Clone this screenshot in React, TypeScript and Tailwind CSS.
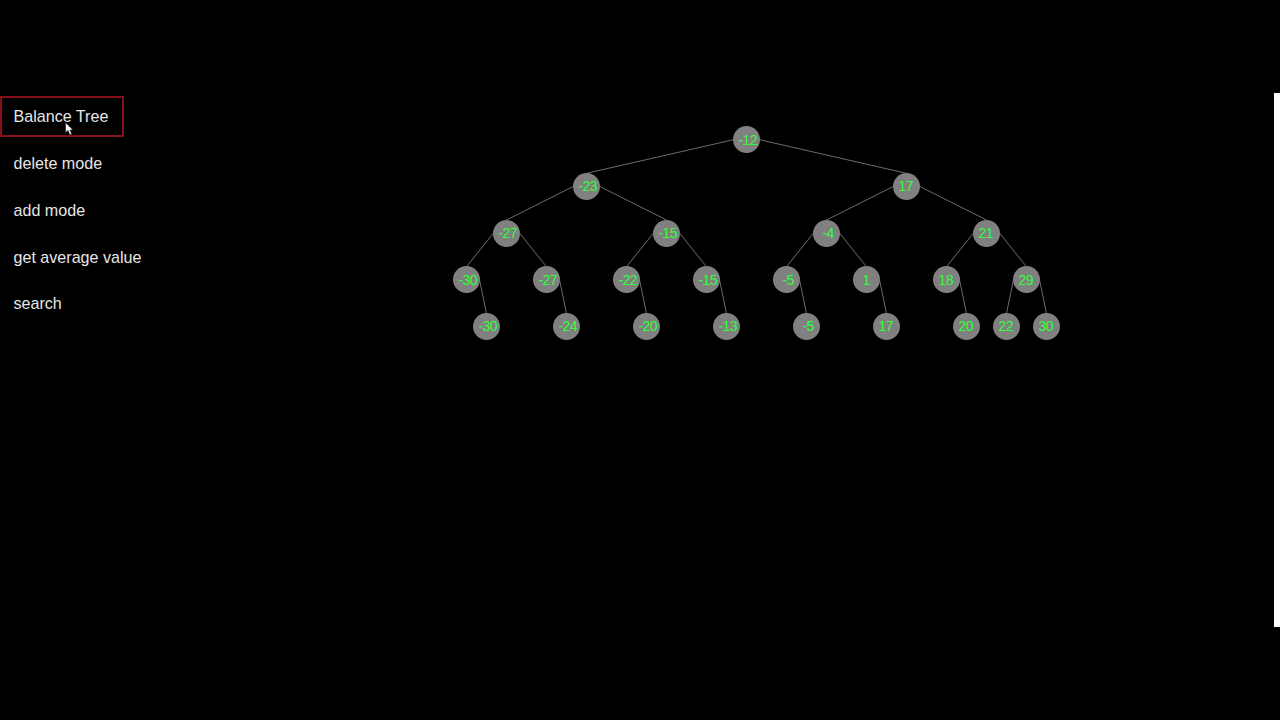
const rows = [139.7, 186.3, 233, 279.7, 326.3];

const nodes = [
  { id: 'a', x: 746.5, level: 0, label: '-12' },
  { id: 'b', x: 586.5, level: 1, label: '-23', parent: 'a' },
  { id: 'c', x: 906.5, level: 1, label: '17', parent: 'a' },
  { id: 'd', x: 506.5, level: 2, label: '-27', parent: 'b' },
  { id: 'e', x: 666.5, level: 2, label: '-15', parent: 'b' },
  { id: 'f', x: 826.5, level: 2, label: '-4', parent: 'c' },
  { id: 'g', x: 986.5, level: 2, label: '21', parent: 'c' },
  { id: 'h', x: 466.5, level: 3, label: '-30', parent: 'd' },
  { id: 'i', x: 546.5, level: 3, label: '-27', parent: 'd' },
  { id: 'j', x: 626.5, level: 3, label: '-22', parent: 'e' },
  { id: 'k', x: 706.5, level: 3, label: '-15', parent: 'e' },
  { id: 'l', x: 786.5, level: 3, label: '-5', parent: 'f' },
  { id: 'm', x: 866.5, level: 3, label: '1', parent: 'f' },
  { id: 'n', x: 946.5, level: 3, label: '18', parent: 'g' },
  { id: 'o', x: 1026.5, level: 3, label: '29', parent: 'g' },
  { id: 'p', x: 486.5, level: 4, label: '-30', parent: 'h' },
  { id: 'q', x: 566.5, level: 4, label: '-24', parent: 'i' },
  { id: 'r', x: 646.5, level: 4, label: '-20', parent: 'j' },
  { id: 's', x: 726.5, level: 4, label: '-13', parent: 'k' },
  { id: 't', x: 806.5, level: 4, label: '-5', parent: 'l' },
  { id: 'u', x: 886.5, level: 4, label: '17', parent: 'm' },
  { id: 'v', x: 966.5, level: 4, label: '20', parent: 'n' },
  { id: 'w', x: 1006.5, level: 4, label: '22', parent: 'o' },
  { id: 'x', x: 1046.5, level: 4, label: '30', parent: 'o' },
];

const menu = ['Balance Tree', 'delete mode', 'add mode', 'get average value', 'search'];

// short labels sit further in from the circle's left edge
function labelInset(label: string) {
  return label === '1' || (label.startsWith('-') && label.length === 2) ? 9.5 : 5.5;
}

function Tree() {
  return (
    <div className="absolute inset-0">
      <svg width="1280" height="720" className="absolute left-0 top-0">
        {nodes.map((node) => {
          const parent = nodes.find((n) => n.id === node.parent);
          if (!parent) return null;
          const dir = node.x < parent.x ? -13 : 13;
          return (
            <line
              key={node.id}
              x1={parent.x + dir}
              y1={rows[parent.level]}
              x2={node.x}
              y2={rows[node.level] - 13}
              stroke="#6c6c6c"
              strokeWidth="1"
            />
          );
        })}
      </svg>
      {nodes.map((node) => (
        <div
          key={node.id}
          className="absolute flex h-[27px] w-[27px] items-center justify-start rounded-full bg-[#808080] pt-[1px] text-[14px] tracking-[-0.6px] text-[#33ff3c]"
          style={{ left: node.x - 13.5, top: rows[node.level] - 13.5, paddingLeft: labelInset(node.label) }}
        >
          {node.label}
        </div>
      ))}
    </div>
  );
}

export default function App() {
  return (
    <div className="relative h-[720px] w-[1280px] overflow-hidden bg-black font-['Liberation_Sans',Arial,sans-serif]">
      <div className="flex flex-col items-start gap-[5.75px] pt-[96px]">
        {menu.map((item, index) => (
          <div
            key={item}
            className={
              index === 0
                ? 'flex h-[41px] w-[124px] items-center border-2 border-[#85101c] pl-[11.5px] text-[16.1px] text-[#e6e6e6]'
                : 'flex h-[41px] items-center border-2 border-transparent pl-[11.5px] text-[16.1px] text-[#e6e6e6]'
            }
          >
            {item}
          </div>
        ))}
      </div>
      <Tree />
      {/* mouse pointer */}
      <svg width="10" height="15" viewBox="0 0 10 15" className="absolute left-[64.5px] top-[121.5px]">
        <path d="M0.5 0.5 L0.5 10.5 L3 8.5 L5 13 L6.8 12 L5 8 L8 8 Z" fill="#f5f5f5" stroke="#222" strokeWidth="0.6" />
      </svg>
      {/* white strip on right edge */}
      <div className="absolute right-0 top-[93px] h-[534px] w-[6px] bg-white" />
    </div>
  );
}
